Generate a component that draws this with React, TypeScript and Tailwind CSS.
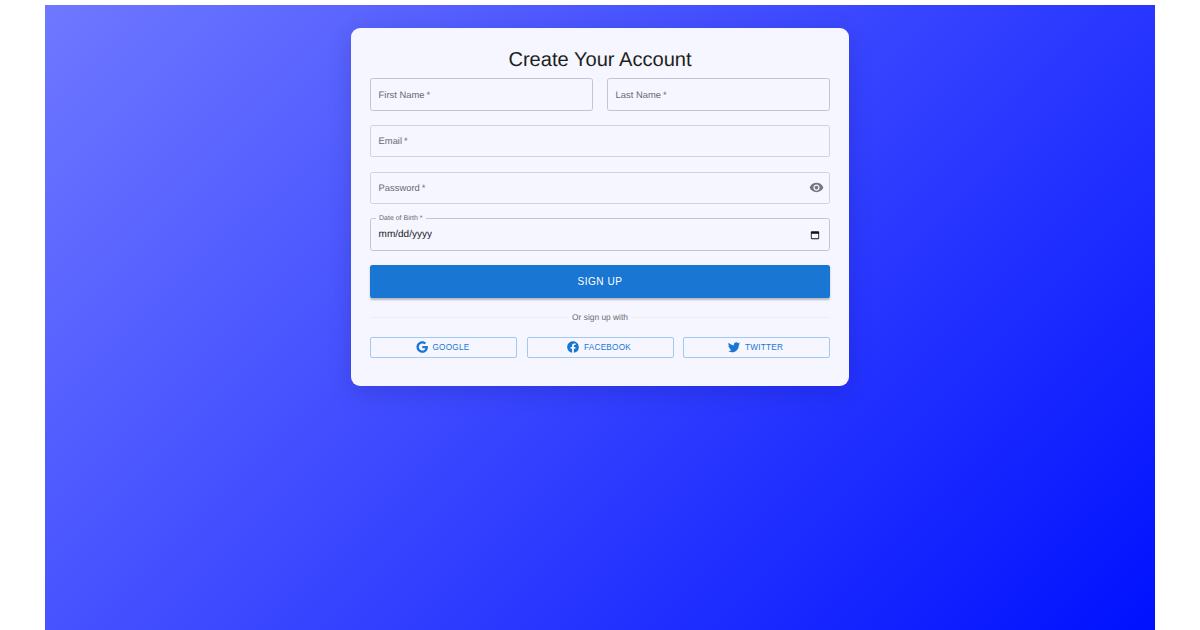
import React from "react";

const font = { fontFamily: '"Liberation Sans", Arial, sans-serif' };

function Field({ label, className = "", children }: { label: string; className?: string; children?: React.ReactNode }) {
  return (
    <div className={`flex h-[32.5px] items-center justify-between rounded-[2.5px] border pl-[7.6px] pr-[5px] ${className}`}>
      <label className="text-[9.4px] leading-none text-[#6a6a70]">{label}<span className="ml-[2px]">*</span></label>
      {children}
    </div>
  );
}

function Social({ label, icon }: { label: string; icon: string }) {
  return (
    <button className="flex h-[21px] flex-1 items-center justify-center gap-[4px] rounded-[2px] border border-[#a3c9f0] pr-[3px] text-[8.2px] leading-none tracking-[0.25px] text-[#1976d2]">
      <svg viewBox="0 0 24 24" className="h-[14px] w-[14px] fill-[#1976d2]"><path d={icon} /></svg>
      <span className="pt-[1.5px]">{label}</span>
    </button>
  );
}

export default function App() {
  return (
    <div className="flex h-[630px] justify-center overflow-hidden bg-white pt-[5px] [text-rendering:geometricPrecision]" style={font}>
      <main className="flex h-[625px] w-[1110px] flex-col items-center bg-[linear-gradient(135deg,#6f78ff,#0011ff)] pt-[23px]">
        <section className="flex h-[358px] w-[498px] flex-col rounded-[9px] bg-[#f5f6ff] px-[19px] pt-[19.5px] shadow-[0_6px_24px_rgba(0,0,60,0.16)]">
          <h1 className="mb-[6.5px] h-[24px] text-center text-[20.1px] leading-[24px] text-[#1f1f22]">Create Your Account</h1>
          <div className="flex flex-col gap-[14.25px]">
            <div className="flex gap-[14px]">
              <Field label="First Name" className="flex-1 border-[#c4c4ce]" />
              <Field label="Last Name" className="flex-1 border-[#c4c4ce]" />
            </div>
            <Field label="Email" className="border-[#d2d2dc]" />
            <Field label="Password" className="border-[#d2d2dc]">
              <svg viewBox="0 0 24 24" className="h-[15px] w-[15px] fill-[#77777e]">
                <path d="M12 4.5C7 4.5 2.73 7.61 1 12c1.73 4.39 6 7.5 11 7.5s9.27-3.11 11-7.5c-1.73-4.39-6-7.5-11-7.5zM12 17c-2.76 0-5-2.24-5-5s2.24-5 5-5 5 2.24 5 5-2.24 5-5 5zm0-8c-1.66 0-3 1.34-3 3s1.34 3 3 3 3-1.34 3-3-1.34-3-3-3z" />
              </svg>
            </Field>
            <div className="relative flex h-[32.5px] items-center rounded-[2.5px] border border-[#c4c4ce] pl-[7.6px] pr-[9px]">
              <label className="absolute -top-[5px] left-[5px] bg-[#f5f6ff] px-[3px] text-[7px] leading-[9px] text-[#6a6a70]">Date of Birth *</label>
              <span className="flex-1 text-[10px] text-[#222226]">mm/dd/yyyy</span>
              <svg viewBox="0 0 24 24" className="h-[10px] w-[10px]">
                <path fill="#111" d="M4 3h16a2 2 0 0 1 2 2v15a2 2 0 0 1-2 2H4a2 2 0 0 1-2-2V5a2 2 0 0 1 2-2zm0 6v11h16V9z" />
              </svg>
            </div>
            <button className="h-[32.5px] rounded-[2.5px] bg-[#1976d2] text-[10.1px] tracking-[0.5px] text-white shadow-[0_1.5px_2px_rgba(0,0,0,0.25)]">SIGN UP</button>
          </div>
          <div className="mt-[13.5px] flex h-[12px] items-center gap-[5.5px]">
            <div className="h-px flex-1 bg-[#ecedf6]" />
            <span className="text-[8.4px] leading-none text-[#6b6b72]">Or sign up with</span>
            <div className="h-px flex-1 bg-[#ecedf6]" />
          </div>
          <div className="mt-[13.5px] flex gap-[9.5px]">
            <Social label="GOOGLE" icon="M12.545,10.239v3.821h5.445c-0.712,2.315-2.647,3.972-5.445,3.972c-3.332,0-6.033-2.701-6.033-6.032s2.701-6.032,6.033-6.032c1.498,0,2.866,0.549,3.921,1.453l2.814-2.814C17.503,2.988,15.139,2,12.545,2C7.021,2,2.543,6.477,2.543,12s4.478,10,10.002,10c8.396,0,10.249-7.85,9.426-11.748L12.545,10.239z" />
            <Social label="FACEBOOK" icon="M12 2.04c-5.5 0-10 4.49-10 10.02 0 5 3.66 9.15 8.44 9.9v-7H7.9v-2.9h2.54V9.85c0-2.51 1.49-3.89 3.78-3.89 1.09 0 2.23.19 2.23.19v2.47h-1.26c-1.24 0-1.63.77-1.63 1.54v1.88h2.78l-.45 2.9h-2.33v7a10 10 0 0 0 8.44-9.9c0-5.53-4.5-10.02-10-10.02Z" />
            <Social label="TWITTER" icon="M22.46 6c-.77.35-1.6.58-2.46.69.88-.53 1.56-1.37 1.88-2.38-.83.5-1.75.85-2.72 1.05C18.37 4.5 17.26 4 16 4c-2.35 0-4.27 1.92-4.27 4.29 0 .34.04.67.11.98C8.28 9.09 5.11 7.38 3 4.79c-.37.63-.58 1.37-.58 2.15 0 1.49.75 2.81 1.91 3.56-.71 0-1.37-.2-1.95-.5v.03c0 2.08 1.48 3.82 3.44 4.21a4.22 4.22 0 0 1-1.93.07 4.28 4.28 0 0 0 4 2.98 8.521 8.521 0 0 1-5.33 1.84c-.34 0-.68-.02-1.02-.06C3.44 20.29 5.7 21 8.12 21 16 21 20.33 14.46 20.33 8.79c0-.19 0-.37-.01-.56.84-.6 1.56-1.36 2.14-2.23z" />
          </div>
        </section>
      </main>
    </div>
  );
}
